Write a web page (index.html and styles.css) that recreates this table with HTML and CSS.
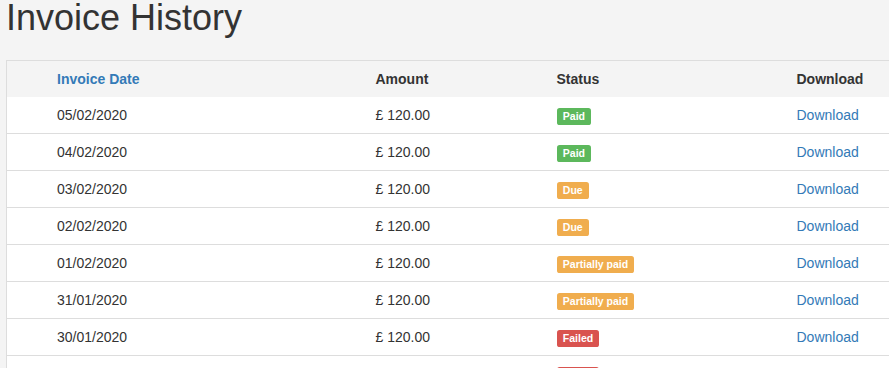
FILE: index.html
```html
<!DOCTYPE html>
<html lang="en">
<head>
    <meta charset="UTF-8">
    <meta name="viewport" content="width=device-width, initial-scale=1.0">
    <title>Invoice History</title>
    <link rel="stylesheet" href="styles.css">
</head>
<body>
    <div class="page">
        <h1>Invoice History</h1>

        <table class="invoice-table">
            <colgroup>
                <col class="col-date">
                <col class="col-amount">
                <col class="col-status">
                <col>
            </colgroup>
            <thead>
                <tr>
                    <th class="cell-date"><a href="#">Invoice Date</a></th>
                    <th>Amount</th>
                    <th>Status</th>
                    <th>Download</th>
                </tr>
            </thead>
            <tbody>
                <tr>
                    <td class="cell-date">05/02/2020</td>
                    <td>&pound; 120.00</td>
                    <td><span class="label label-success">Paid</span></td>
                    <td><a href="#">Download</a></td>
                </tr>
                <tr>
                    <td class="cell-date">04/02/2020</td>
                    <td>&pound; 120.00</td>
                    <td><span class="label label-success">Paid</span></td>
                    <td><a href="#">Download</a></td>
                </tr>
                <tr>
                    <td class="cell-date">03/02/2020</td>
                    <td>&pound; 120.00</td>
                    <td><span class="label label-warning">Due</span></td>
                    <td><a href="#">Download</a></td>
                </tr>
                <tr>
                    <td class="cell-date">02/02/2020</td>
                    <td>&pound; 120.00</td>
                    <td><span class="label label-warning">Due</span></td>
                    <td><a href="#">Download</a></td>
                </tr>
                <tr>
                    <td class="cell-date">01/02/2020</td>
                    <td>&pound; 120.00</td>
                    <td><span class="label label-warning">Partially paid</span></td>
                    <td><a href="#">Download</a></td>
                </tr>
                <tr>
                    <td class="cell-date">31/01/2020</td>
                    <td>&pound; 120.00</td>
                    <td><span class="label label-warning">Partially paid</span></td>
                    <td><a href="#">Download</a></td>
                </tr>
                <tr>
                    <td class="cell-date">30/01/2020</td>
                    <td>&pound; 120.00</td>
                    <td><span class="label label-danger">Failed</span></td>
                    <td><a href="#">Download</a></td>
                </tr>
                <tr>
                    <td class="cell-date">29/01/2020</td>
                    <td>&pound; 120.00</td>
                    <td><span class="label label-danger">Failed</span></td>
                    <td><a href="#">Download</a></td>
                </tr>
            </tbody>
        </table>
    </div>
</body>
</html>
```

FILE: styles.css
```css
html {
    background-color: #f4f4f4;
}

body {
    margin: 0;
    overflow: hidden;
    font-family: "Liberation Sans", Arial, sans-serif;
    font-size: 14px;
    line-height: 20px;
    color: #333;
}

.page {
    padding: 0 6px;
}

h1 {
    margin: 0 0 24px;
    font-size: 36px;
    font-weight: 500;
    line-height: 1;
    color: #333;
}

a {
    color: #337ab7;
    text-decoration: none;
}

.invoice-table {
    width: 960px;
    table-layout: fixed;
    border-collapse: collapse;
    border: 1px solid #ddd;
    background-color: #fff;
}

.col-date {
    width: 361px;
}

.col-amount {
    width: 181px;
}

.col-status {
    width: 240px;
}

.invoice-table th,
.invoice-table td {
    padding: 8px;
    text-align: left;
    vertical-align: top;
}

.invoice-table thead th {
    background-color: #f4f4f4;
    font-weight: bold;
}

.invoice-table td {
    border-bottom: 1px solid #ddd;
}

.invoice-table .cell-date {
    padding-left: 50px;
}

.label {
    padding: .2em .6em .3em;
    font-size: 75%;
    font-weight: bold;
    line-height: 1;
    color: #fff;
    white-space: nowrap;
    border-radius: .25em;
}

.label-success {
    background-color: #5cb85c;
}

.label-warning {
    background-color: #f0ad4e;
}

.label-danger {
    background-color: #d9534f;
}
```
